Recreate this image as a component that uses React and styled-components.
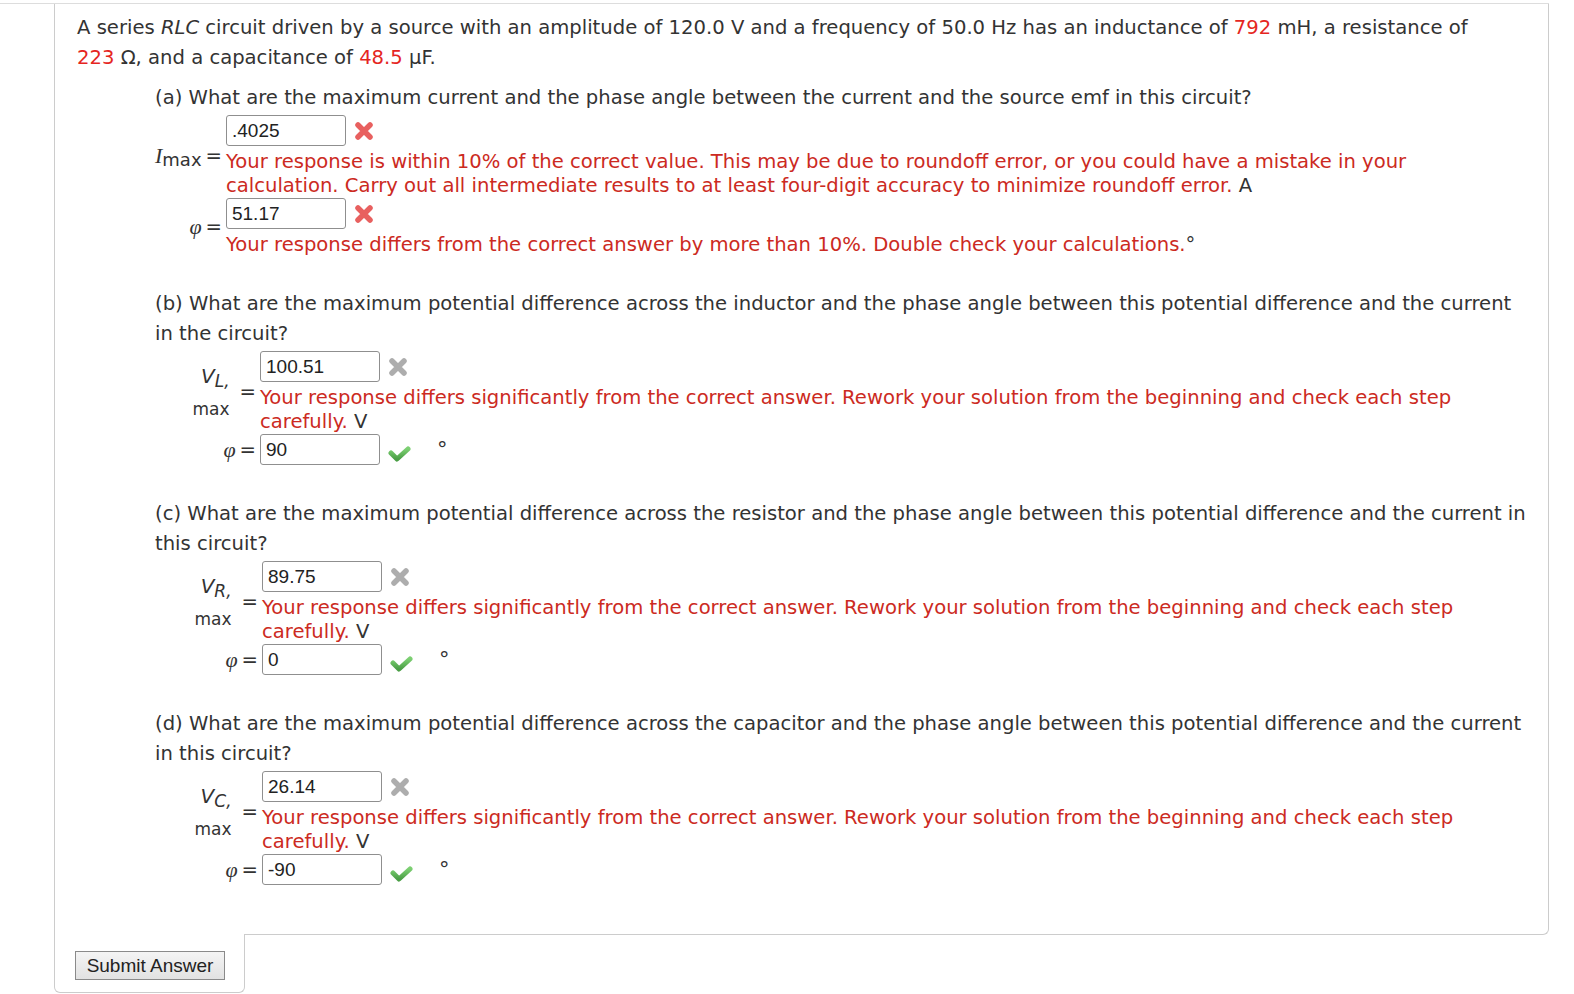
import React from 'react';
import styled, { createGlobalStyle } from 'styled-components';

const GlobalStyle = createGlobalStyle`
  body {
    margin: 0;
    background: #ffffff;
    font-family: "DejaVu Sans", Verdana, sans-serif;
    color: #333333;
  }
`;

const TopRule = styled.div`
  width: 1549px;
  height: 3px;
  border-bottom: 1px solid #dddddd;
`;

const Panel = styled.div`
  box-sizing: border-box;
  width: 1495px;
  margin-left: 54px;
  padding: 9px 20px 49px 22px;
  border: 1px solid #cccccc;
  border-top: none;
  border-bottom-right-radius: 6px;
  font-size: 19.6px;
`;

const Intro = styled.p`
  margin: 0;
  line-height: 30px;
`;

const Given = styled.span`
  color: #e5261f;
`;

const Part = styled.div`
  margin-left: 78px;
  margin-top: ${(props) => (props.first ? '10px' : '34px')};
`;

const Question = styled.p`
  margin: 0 0 2px 0;
  line-height: 30px;
`;

const Answers = styled.div`
  display: grid;
  grid-template-columns: ${(props) => props.labelWidth || 'auto'} 1fr;
  column-gap: 4px;
  row-gap: 2px;
`;

const Label = styled.div`
  display: flex;
  align-items: center;
  justify-content: flex-end;
  color: #333333;
`;

const Equals = styled.span`
  margin-left: ${(props) => props.wide || '4px'};
`;

const MathSerif = styled.span`
  font-family: "Liberation Serif", "Times New Roman", serif;
  font-style: italic;
  font-size: 22px;
`;

const Sub = styled.span`
  font-size: 18px;
  position: relative;
  top: 4px;
`;

const Stack = styled.span`
  display: inline-flex;
  flex-direction: column;
  align-items: flex-end;
  line-height: 32px;
  padding-top: 2px;
`;

const SansItalic = styled.span`
  font-style: italic;
  font-size: 20px;
`;

const SubItalic = styled.span`
  font-style: italic;
  font-size: 17px;
  position: relative;
  top: 4px;
`;

const Small = styled.span`
  font-size: 17px;
`;

const Cell = styled.div`
  display: flex;
  flex-direction: column;
  align-items: flex-start;
  gap: 2px;
`;

const InputLine = styled.div`
  display: flex;
  align-items: center;
  height: 31px;
`;

const Field = styled.div`
  box-sizing: border-box;
  width: 120px;
  height: 31px;
  padding: 0 5px;
  border: 1px solid #8f8f8f;
  border-radius: 3px;
  font-family: "Liberation Sans", Arial, sans-serif;
  font-size: 19px;
  line-height: 29px;
  color: #222222;
  background: #ffffff;
`;

const Mark = styled.span`
  display: inline-flex;
  margin-left: 7px;
  margin-top: ${(props) => (props.low ? '6px' : '0')};
`;

const Unit = styled.span`
  margin-left: 26px;
  font-size: 21px;
  color: #333333;
`;

const Message = styled.div`
  max-width: 1285px;
  color: #cc2a22;
  line-height: 24px;
  padding-top: 2px;
  margin-bottom: -2px;
`;

const After = styled.span`
  color: #333333;
`;

const Tab = styled.div`
  box-sizing: border-box;
  width: 191px;
  height: 59px;
  margin-left: 54px;
  margin-top: -1px;
  padding: 17px 0 0 20px;
  background: #ffffff;
  border: 1px solid #cccccc;
  border-top: none;
  border-radius: 0 0 6px 6px;
`;

const SubmitButton = styled.button`
  box-sizing: border-box;
  width: 150px;
  height: 29px;
  padding: 0;
  border: 1px solid #8a8a8a;
  border-radius: 0;
  background: linear-gradient(#f4f4f4, #e2e2e2);
  font-family: "Liberation Sans", Arial, sans-serif;
  font-size: 19px;
  color: #222222;
`;

function CrossIcon({ color }) {
  return (
    <svg width="22" height="22" viewBox="0 0 22 22">
      <path
        d="M5 5 L17 17 M17 5 L5 17"
        stroke={color}
        strokeWidth="5.5"
        strokeLinecap="round"
        fill="none"
      />
    </svg>
  );
}

function CheckIcon() {
  return (
    <svg width="24" height="22" viewBox="0 0 24 22">
      <defs>
        <linearGradient id="chk" x1="0" y1="0" x2="0" y2="1">
          <stop offset="0" stopColor="#7ccf72" />
          <stop offset="1" stopColor="#4a9e45" />
        </linearGradient>
      </defs>
      <path
        d="M4 11 L10 17 L21 7"
        stroke="url(#chk)"
        strokeWidth="5"
        strokeLinecap="round"
        strokeLinejoin="round"
        fill="none"
      />
    </svg>
  );
}

const DIFFERS =
  'Your response differs significantly from the correct answer. Rework your solution from the beginning and check each step carefully.';

function Phi() {
  return <MathSerif>φ</MathSerif>;
}

function VLabel({ letter }) {
  return (
    <>
      <Stack>
        <span>
          <SansItalic>V</SansItalic>
          <SubItalic>{letter},</SubItalic>
        </span>
        <Small>max</Small>
      </Stack>
      <Equals wide="10px">=</Equals>
    </>
  );
}

function AnswerRow({ label, value, mark, unit, message, after }) {
  return (
    <>
      <Label>{label}</Label>
      <Cell>
        <InputLine>
          <Field>{value}</Field>
          <Mark low={mark === 'right'}>
            {mark === 'wrong' && <CrossIcon color="#e8605f" />}
            {mark === 'off' && <CrossIcon color="#adadad" />}
            {mark === 'right' && <CheckIcon />}
          </Mark>
          {unit && <Unit>{unit}</Unit>}
        </InputLine>
        {message && (
          <Message>
            {message}
            {after && <After>{after}</After>}
          </Message>
        )}
      </Cell>
    </>
  );
}

const VOLTAGE_PARTS = [
  {
    key: 'b',
    question:
      '(b) What are the maximum potential difference across the inductor and the phase angle between this potential difference and the current in the circuit?',
    letter: 'L',
    value: '100.51',
    phi: '90',
    labelWidth: '101px',
  },
  {
    key: 'c',
    question:
      '(c) What are the maximum potential difference across the resistor and the phase angle between this potential difference and the current in this circuit?',
    letter: 'R',
    value: '89.75',
    phi: '0',
    labelWidth: '103px',
  },
  {
    key: 'd',
    question:
      '(d) What are the maximum potential difference across the capacitor and the phase angle between this potential difference and the current in this circuit?',
    letter: 'C',
    value: '26.14',
    phi: '-90',
    labelWidth: '103px',
  },
];

export default function App() {
  return (
    <>
      <GlobalStyle />
      <TopRule />
      <Panel>
        <Intro>
          A series <i>RLC</i> circuit driven by a source with an amplitude of
          120.0 V and a frequency of 50.0 Hz has an inductance of{' '}
          <Given>792</Given> mH, a resistance of <Given>223</Given>{'\u00a0'}Ω,
          and a capacitance of <Given>48.5</Given> μF.
        </Intro>

        <Part first>
          <Question>
            (a) What are the maximum current and the phase angle between the
            current and the source emf in this circuit?
          </Question>
          <Answers>
            <AnswerRow
              label={
                <>
                  <MathSerif>I</MathSerif>
                  <Sub>max</Sub>
                  <Equals>=</Equals>
                </>
              }
              value=".4025"
              mark="wrong"
              message="Your response is within 10% of the correct value. This may be due to roundoff error, or you could have a mistake in your calculation. Carry out all intermediate results to at least four-digit accuracy to minimize roundoff error."
              after=" A"
            />
            <AnswerRow
              label={
                <>
                  <Phi />
                  <Equals>=</Equals>
                </>
              }
              value="51.17"
              mark="wrong"
              message="Your response differs from the correct answer by more than 10%. Double check your calculations."
              after="°"
            />
          </Answers>
        </Part>

        {VOLTAGE_PARTS.map((part) => (
          <Part key={part.key}>
            <Question>{part.question}</Question>
            <Answers labelWidth={part.labelWidth}>
              <AnswerRow
                label={<VLabel letter={part.letter} />}
                value={part.value}
                mark="off"
                message={DIFFERS}
                after=" V"
              />
              <AnswerRow
                label={
                  <>
                    <Phi />
                    <Equals>=</Equals>
                  </>
                }
                value={part.phi}
                mark="right"
                unit="°"
              />
            </Answers>
          </Part>
        ))}
      </Panel>
      <Tab>
        <SubmitButton>Submit Answer</SubmitButton>
      </Tab>
    </>
  );
}
